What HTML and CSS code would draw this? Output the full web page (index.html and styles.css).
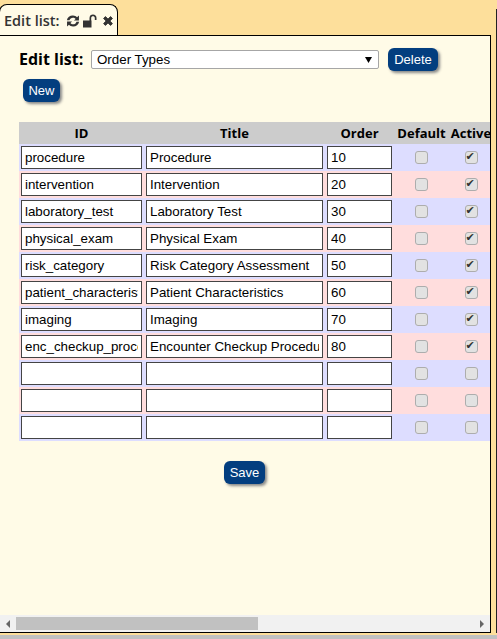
FILE: index.html
```html
<!DOCTYPE html>
<html>
<head>
  <title>Edit list</title>
  <link rel="stylesheet" href="styles.css">
</head>
<body>
  <div class="tabs">
    <div class="tab">
      <span>Edit list:</span>
      <svg class="icon refresh-icon" width="14" height="14" viewBox="0 0 16 14"><path d="M1 6.2 C1.6 2.5 4.8 .4 8 .6 C10 .7 11.5 1.6 12.6 2.6 L14.8 .6 V6.4 H9 L11 4.6 C10.3 3.7 9.2 3.2 8 3.2 C6 3.2 4.5 4.3 4 6.2 Z M15 7.8 C14.4 11.5 11.2 13.6 8 13.4 C6 13.3 4.5 12.4 3.4 11.4 L1.2 13.4 V7.6 H7 L5 9.4 C5.7 10.3 6.8 10.8 8 10.8 C10 10.8 11.5 9.7 12 7.8 Z"/></svg>
      <svg class="icon lock-icon" width="14" height="14" viewBox="0 0 14 14"><path d="M0 6.5 H8.5 V13.5 H0 Z M6.5 6.5 V4 C6.5 1.5 8 .5 10 .5 C12 .5 13.5 1.7 13.5 4 V6 H11.8 V4 C11.8 2.8 11 2.2 10 2.2 C9 2.2 8.2 2.8 8.2 4 V6.5 Z"/></svg>
      <svg class="icon close-icon" width="10" height="10" viewBox="1 1 9 9"><path d="M1.5 3.2 L3.2 1.5 L5.5 3.8 L7.8 1.5 L9.5 3.2 L7.2 5.5 L9.5 7.8 L7.8 9.5 L5.5 7.2 L3.2 9.5 L1.5 7.8 L3.8 5.5 Z" stroke="#333" stroke-width=".8"/></svg>
    </div>
  </div>

  <div class="panel">
    <div class="content">
      <div class="list-form">
        <label class="list-label">Edit list:</label>
        <div class="fake-select">
          <span>Order Types</span>
          <svg width="7" height="6" viewBox="0 0 7 6"><path d="M0 0 H7 L3.5 6 Z"/></svg>
        </div>
        <button class="btn delete-btn">Delete</button>
      </div>
      <button class="btn new-btn">New</button>

      <table class="list-table">
        <thead>
          <tr>
            <th class="col-id">ID</th>
            <th class="col-title">Title</th>
            <th class="col-order">Order</th>
            <th class="col-default">Default</th>
            <th class="col-active">Active</th>
          </tr>
        </thead>
        <tbody id="rows"></tbody>
      </table>

      <div class="save-row">
        <button class="btn">Save</button>
      </div>
    </div>

    <div class="scrollbar">
      <svg class="arrow" width="4" height="8" viewBox="0 0 4 8"><path d="M4 0 V8 L0 4 Z"/></svg>
      <div class="track"><div class="thumb"></div></div>
      <svg class="arrow" width="4" height="8" viewBox="0 0 4 8"><path d="M0 0 V8 L4 4 Z"/></svg>
    </div>
  </div>
  <div class="page-bottom"></div>

  <script>
    const items = [
      ['procedure', 'Procedure', '10'],
      ['intervention', 'Intervention', '20'],
      ['laboratory_test', 'Laboratory Test', '30'],
      ['physical_exam', 'Physical Exam', '40'],
      ['risk_category', 'Risk Category Assessment', '50'],
      ['patient_characteristics', 'Patient Characteristics', '60'],
      ['imaging', 'Imaging', '70'],
      ['enc_checkup_procedure', 'Encounter Checkup Procedure', '80'],
      ['', '', ''],
      ['', '', ''],
      ['', '', '']
    ];

    const rows = document.getElementById('rows');

    function textCell(value) {
      const td = document.createElement('td');
      const input = document.createElement('input');
      input.type = 'text';
      input.value = value;
      td.appendChild(input);
      return td;
    }

    function checkCell(checked) {
      const td = document.createElement('td');
      td.className = 'check-cell';
      const input = document.createElement('input');
      input.type = 'checkbox';
      input.checked = checked;
      td.appendChild(input);
      return td;
    }

    items.forEach(function(item, i) {
      const tr = document.createElement('tr');
      tr.className = i % 2 == 0 ? 'odd' : 'even';
      item.forEach(function(value) {
        tr.appendChild(textCell(value));
      });
      tr.appendChild(checkCell(false));
      tr.appendChild(checkCell(item[0] != ''));
      rows.appendChild(tr);
    });
  </script>
</body>
</html>
```

FILE: styles.css
```css
html, body {
  height: 100%;
}

body {
  position: relative;
  margin: 0;
  padding: 0;
  height: 639px;
  overflow: hidden;
  background-color: #fddf9b;
  font-family: "Liberation Sans", Arial, sans-serif;
  font-size: 13.33px;
  color: #000;
}

body::after {
  content: "";
  position: absolute;
  top: 9px;
  right: 0;
  width: 1px;
  height: 624px;
  background-color: #222;
}

.tabs {
  height: 35px;
  box-sizing: border-box;
  padding-top: 4px;
}

.tab {
  display: flex;
  align-items: center;
  width: 119px;
  height: 32px;
  margin-left: -1px;
  box-sizing: border-box;
  padding: 0 0 0 4px;
  background-color: #fffbe7;
  border: 1px solid #000;
  border-bottom: none;
  border-radius: 8px 8px 0 0;
  font-family: "Open Sans", sans-serif;
  font-weight: 600;
  font-size: 14.5px;
  color: #333;
}

.icon {
  fill: #333;
  flex: none;
}

.refresh-icon {
  margin-left: 6px;
}

.lock-icon {
  margin-left: 3.5px;
}

.close-icon {
  margin-left: 6px;
}

.panel {
  width: 491px;
  height: 598px;
  box-sizing: border-box;
  background-color: #fffbe7;
  border-top: 1px solid #000;
  border-right: 1px solid #000;
  border-bottom: 1px solid #000;
  display: flex;
  flex-direction: column;
}

.content {
  flex: 1;
  overflow: hidden;
  padding: 9px 0 0 19px;
}

.list-form {
  display: flex;
  align-items: flex-start;
  height: 34px;
}

.list-label {
  font-family: "Open Sans", sans-serif;
  font-weight: 700;
  font-size: 16px;
  line-height: 28px;
  width: 72px;
}

.fake-select {
  display: flex;
  align-items: center;
  justify-content: space-between;
  width: 288px;
  height: 19px;
  margin-top: 5px;
  box-sizing: border-box;
  padding: 0 6px 0 5px;
  background-color: #fff;
  border: 1px solid #a6a6a6;
  border-radius: 2px;
}

.btn {
  padding: 0;
  width: 50px;
  height: 23px;
  background-color: #033e7f;
  color: #fff;
  border: none;
  border-radius: 6px;
  box-shadow: 2px 2px 3px #888;
  font-family: "Liberation Sans", Arial, sans-serif;
  font-size: 13px;
  cursor: pointer;
}

.delete-btn {
  margin: 3px 0 0 9px;
}

.new-btn {
  display: block;
  width: 37px;
  margin-left: 4px;
}

.list-table {
  margin-top: 20px;
  width: 474px;
  table-layout: fixed;
  border-collapse: collapse;
}

th {
  height: 22px;
  padding: 0;
  background-color: #cccccc;
  font-family: "Open Sans", sans-serif;
  font-weight: 700;
  font-size: 13px;
  text-align: center;
  white-space: nowrap;
}

.col-id { width: 125px; }
.col-title { width: 181px; }
.col-order { width: 69px; }
.col-default { width: 55px; }
.col-active { width: 44px; }

td {
  height: 27px;
  padding: 0 2px;
  box-sizing: border-box;
}

td input[type="text"] {
  display: block;
  width: 100%;
  height: 23px;
  box-sizing: border-box;
  padding: 0 3px;
  border: 1px solid #444;
  background-color: #fff;
  font-family: "Liberation Sans", Arial, sans-serif;
  font-size: 13.33px;
  outline: none;
}

.check-cell {
  padding: 0;
}

.check-cell input {
  appearance: none;
  position: relative;
  display: block;
  box-sizing: border-box;
  margin: 0 auto;
  width: 13px;
  height: 13px;
  background-color: #e2e2e2;
  border: 1px solid #adadad;
  border-radius: 3px;
}

.check-cell input:checked::after {
  content: "\2714";
  position: absolute;
  top: -1px;
  left: 0;
  font-family: "DejaVu Sans", sans-serif;
  font-size: 11px;
  line-height: 12px;
  color: #333;
}

.odd td {
  background-color: #ddddff;
}

.even td {
  background-color: #ffdddd;
}

.save-row {
  margin-top: 20px;
  padding-left: 205px;
}

.save-row .btn {
  width: 41px;
}

.scrollbar {
  display: flex;
  align-items: center;
  height: 17px;
  background-color: #f1f1f1;
}

.arrow {
  flex: none;
  fill: #666;
  margin: 0 6px;
}

.track {
  flex: 1;
  height: 13px;
}

.thumb {
  width: 242px;
  height: 100%;
  background-color: #c1c1c1;
}

.page-bottom {
  height: 4px;
  margin-top: 2px;
  background-color: #c1c1c1;
}
```
